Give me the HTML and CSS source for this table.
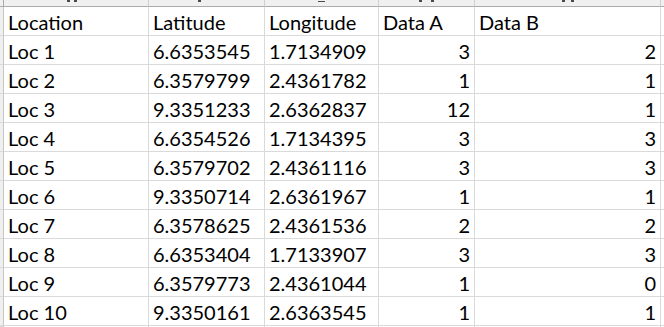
FILE: index.html
```html
<!DOCTYPE html>
<html>
<head>
<meta charset="utf-8">
<link rel="stylesheet" href="styles.css">
</head>
<body>
<div class="sheet">
  <div class="ch corner"></div>
  <div class="ch col-a"><span class="mk"></span><span class="mk"></span></div>
  <div class="ch col-b"><span class="mk"></span></div>
  <div class="ch col-c"><span class="mk wide"></span></div>
  <div class="ch col-d"><span class="mk"></span><span class="mk"></span></div>
  <div class="ch col-e"><span class="mk"></span><span class="mk"></span></div>
  <div class="ch last"></div>

  <div class="rh"></div><div class="c">Location</div><div class="c">Latitude</div><div class="c">Longitude</div><div class="c">Data A</div><div class="c">Data B</div><div class="c x"></div>
  <div class="rh"></div><div class="c">Loc 1</div><div class="c">6.6353545</div><div class="c">1.7134909</div><div class="c n">3</div><div class="c n">2</div><div class="c x"></div>
  <div class="rh"></div><div class="c">Loc 2</div><div class="c">6.3579799</div><div class="c">2.4361782</div><div class="c n">1</div><div class="c n">1</div><div class="c x"></div>
  <div class="rh"></div><div class="c">Loc 3</div><div class="c">9.3351233</div><div class="c">2.6362837</div><div class="c n">12</div><div class="c n">1</div><div class="c x"></div>
  <div class="rh"></div><div class="c">Loc 4</div><div class="c">6.6354526</div><div class="c">1.7134395</div><div class="c n">3</div><div class="c n">3</div><div class="c x"></div>
  <div class="rh"></div><div class="c">Loc 5</div><div class="c">6.3579702</div><div class="c">2.4361116</div><div class="c n">3</div><div class="c n">3</div><div class="c x"></div>
  <div class="rh"></div><div class="c">Loc 6</div><div class="c">9.3350714</div><div class="c">2.6361967</div><div class="c n">1</div><div class="c n">1</div><div class="c x"></div>
  <div class="rh"></div><div class="c">Loc 7</div><div class="c">6.3578625</div><div class="c">2.4361536</div><div class="c n">2</div><div class="c n">2</div><div class="c x"></div>
  <div class="rh"></div><div class="c">Loc 8</div><div class="c">6.6353404</div><div class="c">1.7133907</div><div class="c n">3</div><div class="c n">3</div><div class="c x"></div>
  <div class="rh"></div><div class="c">Loc 9</div><div class="c">6.3579773</div><div class="c">2.4361044</div><div class="c n">1</div><div class="c n">0</div><div class="c x"></div>
  <div class="rh"></div><div class="c">Loc 10</div><div class="c">9.3350161</div><div class="c">2.6363545</div><div class="c n">1</div><div class="c n">1</div><div class="c x"></div>
  <div class="rh"></div><div class="c"></div><div class="c"></div><div class="c"></div><div class="c"></div><div class="c"></div><div class="c x"></div>
</div>
</body>
</html>
```

FILE: styles.css
```css
html, body {
  margin: 0;
  padding: 0;
  background: #ffffff;
}
body {
  width: 664px;
  height: 327px;
  overflow: hidden;
  font-family: "Lato", "Open Sans", sans-serif;
  font-size: 20px;
  color: #000000;
}
.sheet {
  display: grid;
  grid-template-columns: 4px 145px 116px 114px 96px 186px 1fr;
  grid-template-rows: 7px repeat(11, 29px) 1px;
  width: 664px;
  height: 327px;
}
.sheet > div {
  box-sizing: border-box;
  border-right: 1px solid #dadada;
  border-bottom: 1px solid #dadada;
  overflow: hidden;
  white-space: nowrap;
}
.ch {
  background: #f0f0f0;
  border-bottom-color: #ababab !important;
  border-right-color: #d0d0d0 !important;
  display: flex;
  justify-content: center;
  align-items: flex-start;
  gap: 4px;
}
.ch.corner {
  border-right-color: #ababab !important;
}
.ch.last {
  border-right: none !important;
}
.col-a { padding-right: 8px; }
.col-b { padding-right: 14px; }
.col-c { padding-right: 0; }
.col-d { padding-right: 0; gap: 9px; }
.col-e { padding-right: 0; gap: 6px; }
.mk {
  display: block;
  width: 3px;
  height: 2px;
  background: #4a4a4a;
}
.mk.wide {
  width: 7px;
  height: 1px;
  margin-top: 1px;
}
.rh {
  background: #f0f0f0;
  border-right-color: #c6c6c6 !important;
}
.c {
  padding: 2px 4px 0 4px;
  line-height: 27px;
}
.c.n {
  text-align: right;
  padding-right: 4px;
}
.c.x {
  border-right: none !important;
}
```
